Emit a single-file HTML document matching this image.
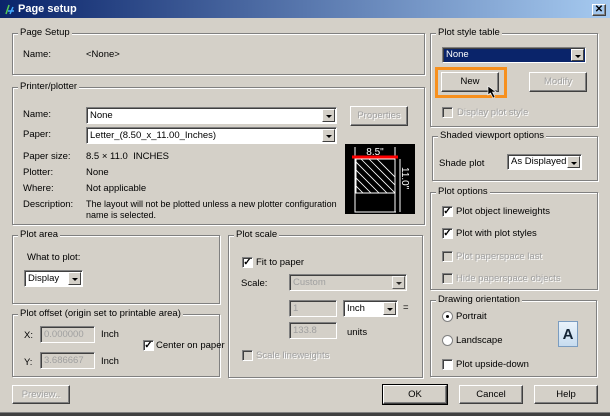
<!DOCTYPE html>
<html><head><style>
*{box-sizing:border-box;margin:0;padding:0}
body{width:610px;height:416px;background:#d4d0c8;font-family:"Liberation Sans",sans-serif;font-size:9.5px;color:#000;position:relative;overflow:hidden}
.a{position:absolute;white-space:nowrap}
.g{position:absolute;border:1px solid #808080;box-shadow:1px 1px 0 #fff inset,1px 1px 0 #fff}
.gt{position:absolute;top:-7px;left:5px;background:#d4d0c8;padding:0 2px;white-space:nowrap}
.btn{position:absolute;border:1px solid;border-color:#fff #404040 #404040 #fff;box-shadow:inset -1px -1px 0 #808080;text-align:center;line-height:17px}
.dis{color:#a0a0a0;text-shadow:1px 1px 0 #fff}
.fld{position:absolute;background:#fff;border:1px solid;border-color:#808080 #fff #fff #808080;box-shadow:inset 1px 1px 0 #404040;padding-left:3px;line-height:15px}
.fd{background:#d4d0c8;color:#a0a0a0}
.dd{position:absolute;right:1px;top:1px;bottom:1px;width:13px;background:#d4d0c8;border:1px solid;border-color:#fff #404040 #404040 #fff}
.dd:after{content:"";position:absolute;left:3px;top:5px;border:3px solid transparent;border-top:3px solid #000;border-bottom:0}
.cb{position:absolute;width:11px;height:11px;background:#fff;border:1px solid;border-color:#808080 #fff #fff #808080;box-shadow:inset 1px 1px 0 #404040;font-size:10px;line-height:9px;text-align:center;font-weight:bold}
.cbd{background:#d4d0c8}
.rb{position:absolute;width:11px;height:11px;border-radius:50%;background:#fff;border:1px solid #808080}
</style></head><body>
<div class="a" style="left:0;top:0;width:610px;height:18px;background:linear-gradient(90deg,#0a246a,#a6caf0)"></div>
<div class="a" style="left:4px;top:3px;width:10px;height:12px;color:#4c4">
<svg width="11" height="12"><path d="M2 11 L5 2" stroke="#5c5" stroke-width="1.5"/><path d="M6 11 L9 4 M4 8 H10" stroke="#4af" stroke-width="1.5"/></svg></div>
<div class="a" style="left:18px;top:3px;color:#fff;font-weight:bold;font-size:11px">Page setup</div>
<div class="btn" style="left:592px;top:4px;width:14px;height:12px;line-height:10px;font-weight:bold;font-size:10px">✕</div>
<div class="a" style="left:0;top:412px;width:610px;height:4px;background:#404040;border-top:1px solid #808080"></div>

<div class="g" style="left:12px;top:33px;width:413px;height:42px"><span class="gt">Page Setup</span></div>
<div class="a" style="left:23px;top:49px">Name:</div><div class="a" style="left:86px;top:49px">&lt;None&gt;</div>

<div class="g" style="left:12px;top:87px;width:413px;height:138px"><span class="gt">Printer/plotter</span></div>
<div class="a" style="left:23px;top:109px">Name:</div>
<div class="fld" style="left:86px;top:107px;width:251px;height:17px">None<div class="dd"></div></div>
<div class="a" style="left:23px;top:129px">Paper:</div>
<div class="fld" style="left:86px;top:127px;width:251px;height:17px">Letter_(8.50_x_11.00_Inches)<div class="dd"></div></div>
<div class="btn dis" style="left:350px;top:106px;width:58px;height:20px">Properties</div>
<div class="a" style="left:23px;top:151px">Paper size:</div><div class="a" style="left:86px;top:151px">8.5 × 11.0&nbsp; INCHES</div>
<div class="a" style="left:23px;top:167px">Plotter:</div><div class="a" style="left:86px;top:167px">None</div>
<div class="a" style="left:23px;top:183px">Where:</div><div class="a" style="left:86px;top:183px">Not applicable</div>
<div class="a" style="left:23px;top:199px">Description:</div><div class="a" style="left:86px;top:199px;line-height:11px;font-size:9px">The layout will not be plotted unless a new plotter configuration<br>name is selected.</div>
<svg class="a" style="left:345px;top:144px" width="70" height="70"><rect width="70" height="70" fill="#000"/>
<defs><clipPath id="c"><rect x="11" y="15" width="39" height="34"/></clipPath></defs>
<g clip-path="url(#c)" stroke="#fff" stroke-width="0.8"><path d="M0 15 L40 55 M8 15 L48 55 M16 15 L56 55 M24 15 L64 55 M32 15 L72 55 M-8 15 L32 55 M-16 15 L24 55 M-24 15 L16 55"/></g>
<rect x="11" y="15" width="39" height="34" fill="none" stroke="#fff"/>
<path d="M10 3 V68 H51 M50 3 V68 M55 15 V68" stroke="#fff" fill="none"/>
<path d="M7 13 H53" stroke="#f00" stroke-width="3"/>
<text x="30" y="11" fill="#fff" font-size="10" text-anchor="middle" font-family="Liberation Sans">8.5"</text>
<text x="0" y="0" fill="#fff" font-size="10" font-family="Liberation Sans" transform="translate(57,23) rotate(90)">11.0"</text></svg>

<div class="g" style="left:12px;top:235px;width:208px;height:69px"><span class="gt">Plot area</span></div>
<div class="a" style="left:27px;top:252px">What to plot:</div>
<div class="fld" style="left:24px;top:270px;width:59px;height:17px">Display<div class="dd"></div></div>

<div class="g" style="left:12px;top:314px;width:208px;height:63px"><span class="gt">Plot offset (origin set to printable area)</span></div>
<div class="a" style="left:24px;top:330px">X:</div><div class="fld fd" style="left:40px;top:326px;width:55px;height:17px">0.000000</div><div class="a" style="left:101px;top:329px">Inch</div>
<div class="a" style="left:24px;top:357px">Y:</div><div class="fld fd" style="left:40px;top:352px;width:55px;height:17px">3.686667</div><div class="a" style="left:101px;top:356px">Inch</div>
<div class="cb" style="left:143px;top:340px">✓</div><div class="a" style="left:156px;top:340px">Center on paper</div>

<div class="g" style="left:228px;top:235px;width:195px;height:143px"><span class="gt">Plot scale</span></div>
<div class="cb" style="left:242px;top:257px">✓</div><div class="a" style="left:256px;top:257px">Fit to paper</div>
<div class="a" style="left:241px;top:278px">Scale:</div>
<div class="fld fd" style="left:289px;top:274px;width:118px;height:17px">Custom<div class="dd" style="opacity:.8"></div></div>
<div class="fld fd" style="left:289px;top:300px;width:48px;height:17px">1</div>
<div class="fld" style="left:343px;top:300px;width:55px;height:17px">Inch<div class="dd"></div></div>
<div class="a" style="left:403px;top:302px">=</div>
<div class="fld fd" style="left:289px;top:322px;width:48px;height:17px">133.8</div>
<div class="a" style="left:347px;top:327px">units</div>
<div class="cb cbd" style="left:242px;top:350px"></div><div class="a dis" style="left:256px;top:350px">Scale lineweights</div>

<div class="g" style="left:430px;top:33px;width:168px;height:94px"><span class="gt">Plot style table</span></div>
<div class="fld" style="left:442px;top:47px;width:144px;height:16px;background:#0a246a;color:#fff;line-height:14px">None<div class="dd"></div></div>
<div class="a" style="left:435px;top:67px;width:72px;height:31px;border:3px solid #f7901e"></div>
<div class="btn" style="left:441px;top:72px;width:58px;height:20px">New</div>
<div class="btn dis" style="left:529px;top:72px;width:58px;height:20px">Modify</div>
<svg class="a" style="left:487px;top:85px" width="16" height="16"><path d="M1 1 L1 10 L3.5 8 L6 13 L8 12 L5.5 7 L9 7 Z" fill="#000" stroke="#fff" stroke-width="0.6"/></svg>
<div class="cb cbd" style="left:442px;top:107px"></div><div class="a dis" style="left:457px;top:107px">Display plot style</div>

<div class="g" style="left:432px;top:136px;width:166px;height:45px"><span class="gt">Shaded viewport options</span></div>
<div class="a" style="left:439px;top:158px">Shade plot</div>
<div class="fld" style="left:507px;top:154px;width:75px;height:16px;line-height:14px">As Displayed<div class="dd"></div></div>

<div class="g" style="left:430px;top:192px;width:168px;height:98px"><span class="gt">Plot options</span></div>
<div class="cb" style="left:442px;top:206px">✓</div><div class="a" style="left:456px;top:206px">Plot object lineweights</div>
<div class="cb" style="left:442px;top:228px">✓</div><div class="a" style="left:456px;top:228px">Plot with plot styles</div>
<div class="cb cbd" style="left:442px;top:251px"></div><div class="a dis" style="left:456px;top:251px">Plot paperspace last</div>
<div class="cb cbd" style="left:442px;top:273px"></div><div class="a dis" style="left:456px;top:273px">Hide paperspace objects</div>

<div class="g" style="left:430px;top:300px;width:167px;height:77px"><span class="gt">Drawing orientation</span></div>
<div class="rb" style="left:442px;top:311px"><div style="position:absolute;left:3px;top:3px;width:3px;height:3px;background:#000;border-radius:50%"></div></div><div class="a" style="left:456px;top:311px">Portrait</div>
<div class="rb" style="left:442px;top:335px"></div><div class="a" style="left:456px;top:335px">Landscape</div>
<div class="cb" style="left:442px;top:359px"></div><div class="a" style="left:456px;top:359px">Plot upside-down</div>
<div class="a" style="left:558px;top:321px;width:20px;height:26px;background:linear-gradient(#eaf3fb,#c7dcef);border:1px solid #7a9cc0;font-size:15px;font-weight:bold;text-align:center;line-height:26px;color:#123">A</div>

<div class="btn dis" style="left:12px;top:385px;width:58px;height:19px">Preview..</div>
<div class="btn" style="left:383px;top:385px;width:64px;height:19px;outline:1px solid #000">OK</div>
<div class="btn" style="left:459px;top:385px;width:64px;height:19px">Cancel</div>
<div class="btn" style="left:534px;top:385px;width:64px;height:19px">Help</div>
</body></html>
